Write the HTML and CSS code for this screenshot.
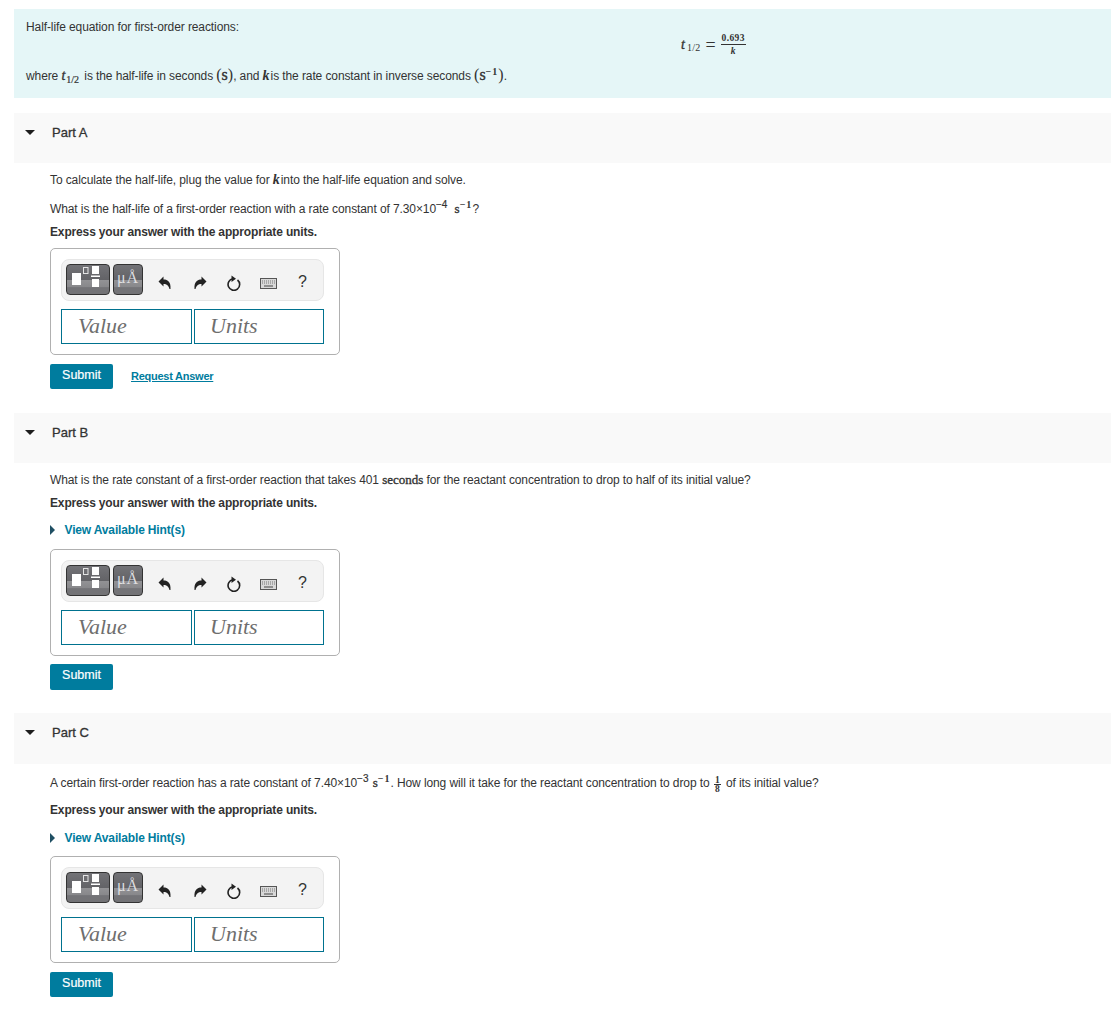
FILE: index.html
```html
<!DOCTYPE html>
<html lang="en">
<head>
<meta charset="utf-8">
<title>Half-life</title>
<link rel="stylesheet" href="styles.css">
</head>
<body>
<svg class="defs" width="0" height="0" aria-hidden="true">
  <defs>
    <g id="i-template">
      <rect x="6" y="9" width="9" height="12" fill="#fff"/>
      <rect x="17.500" y="3.500" width="4.500" height="6" fill="none" stroke="#e4e4e4" stroke-width="1"/>
      <rect x="26" y="2" width="7" height="8" fill="#fff"/>
      <rect x="25" y="11.500" width="9" height="1.500" fill="#fff"/>
      <rect x="26" y="15" width="7" height="8" fill="#fff"/>
    </g>
    <g id="i-undo"><path d="M.5 5.500 5.500.5v3C10 3.500 13 6 12.500 13H11.500C10.500 9.500 9 8 5.500 8v2.500z" fill="#222"/></g>
    <g id="i-redo"><path d="M12.500 5.500 7.500.5v3C3 3.500 0 6 .5 13H1.500C2.500 9.500 4 8 7.500 8v2.500z" fill="#222"/></g>
    <g id="i-reset"><path d="M11.500 5A5.800 5.800 0 1 1 7 3.800" fill="none" stroke="#222" stroke-width="1.600"/><path d="M5.500.5 10 3.800 5.500 7z" fill="#222"/></g>
    <g id="i-keys">
      <rect x=".5" y=".5" width="16" height="10" fill="#d8d8d8" stroke="#555"/>
      <path d="M2 3h13M2 5h13" stroke="#777" stroke-dasharray="1 1"/>
      <path d="M4 8h9" stroke="#777" stroke-width="1.500"/>
    </g>
  </defs>
</svg>

<section class="intro">
  <p class="line">Half-life equation for first-order reactions:</p>
  <div class="formula">
    <span class="m var-t">t</span><sub class="m sub1">1/2</sub><span class="m eq">=</span>
    <span class="frac"><span class="num m b">0.693</span><span class="den m bi">k</span></span>
  </div>
  <p class="line where">where <span class="m var-t">t</span><sub class="m sub">1/2</sub> is the half-life in seconds <span class="m big">(<span class="thick">s</span>)</span>, and <span class="m bi kvar">k</span>is the rate constant in inverse seconds <span class="m big">(<span class="thick">s</span><sup class="sup">−1</sup>)</span>.</p>
</section>

<section class="part part-a">
  <header class="part-head"><span class="caret"></span><h2>Part A</h2></header>
  <div class="part-body">
    <p class="line">To calculate the half-life, plug the value for <span class="m bi kvar">k</span>into the half-life equation and solve.</p>
    <p class="line gap-13">What is the half-life of a first-order reaction with a rate constant of 7.30×10<sup class="sup s2">−4</sup> <span class="m sp">s</span><sup class="sup">−1</sup>?</p>
    <p class="line gap-7"><strong>Express your answer with the appropriate units.</strong></p>
    <div class="widget gap-8">
      <div class="toolbar">
        <span class="tool-btn wide"><svg width="44" height="31" viewBox="0 0 44 31"><use href="#i-template"/></svg></span>
        <span class="tool-btn narrow">μÅ</span>
        <svg class="ico undo" width="14" height="14" viewBox="0 0 14 14"><use href="#i-undo"/></svg>
        <svg class="ico redo" width="14" height="14" viewBox="0 0 14 14"><use href="#i-redo"/></svg>
        <svg class="ico reset" width="16" height="16" viewBox="0 0 16 16"><use href="#i-reset"/></svg>
        <svg class="ico keys" width="17" height="11" viewBox="0 0 17 11"><use href="#i-keys"/></svg>
        <span class="help">?</span>
      </div>
      <div class="fields"><input class="field first" placeholder="Value" aria-label="Value"><input class="field" placeholder="Units" aria-label="Units"></div>
    </div>
    <div class="actions gap-9"><button class="submit">Submit</button><a class="request" href="#">Request Answer</a></div>
  </div>
</section>

<section class="part part-b">
  <header class="part-head"><span class="caret"></span><h2>Part B</h2></header>
  <div class="part-body">
    <p class="line">What is the rate constant of a first-order reaction that takes 401 <span class="m word">seconds</span> for the reactant concentration to drop to half of its initial value?</p>
    <p class="line gap-7"><strong>Express your answer with the appropriate units.</strong></p>
    <p class="line hint gap-10"><span class="hint-caret"></span>View Available Hint(s)</p>
    <div class="widget gap-12">
      <div class="toolbar">
        <span class="tool-btn wide"><svg width="44" height="31" viewBox="0 0 44 31"><use href="#i-template"/></svg></span>
        <span class="tool-btn narrow">μÅ</span>
        <svg class="ico undo" width="14" height="14" viewBox="0 0 14 14"><use href="#i-undo"/></svg>
        <svg class="ico redo" width="14" height="14" viewBox="0 0 14 14"><use href="#i-redo"/></svg>
        <svg class="ico reset" width="16" height="16" viewBox="0 0 16 16"><use href="#i-reset"/></svg>
        <svg class="ico keys" width="17" height="11" viewBox="0 0 17 11"><use href="#i-keys"/></svg>
        <span class="help">?</span>
      </div>
      <div class="fields"><input class="field first" placeholder="Value" aria-label="Value"><input class="field" placeholder="Units" aria-label="Units"></div>
    </div>
    <div class="actions gap-8"><button class="submit">Submit</button></div>
  </div>
</section>

<section class="part part-c">
  <header class="part-head"><span class="caret"></span><h2>Part C</h2></header>
  <div class="part-body">
    <p class="line">A certain first-order reaction has a rate constant of 7.40×10<sup class="sup s3">−3</sup> <span class="m sp">s</span><sup class="sup">−1</sup>. How long will it take for the reactant concentration to drop to <span class="mini-frac"><span class="mini-num m b">1</span><span class="mini-den m b">8</span></span> of its initial value?</p>
    <p class="line gap-10"><strong>Express your answer with the appropriate units.</strong></p>
    <p class="line hint gap-11"><span class="hint-caret"></span>View Available Hint(s)</p>
    <div class="widget gap-11">
      <div class="toolbar">
        <span class="tool-btn wide"><svg width="44" height="31" viewBox="0 0 44 31"><use href="#i-template"/></svg></span>
        <span class="tool-btn narrow">μÅ</span>
        <svg class="ico undo" width="14" height="14" viewBox="0 0 14 14"><use href="#i-undo"/></svg>
        <svg class="ico redo" width="14" height="14" viewBox="0 0 14 14"><use href="#i-redo"/></svg>
        <svg class="ico reset" width="16" height="16" viewBox="0 0 16 16"><use href="#i-reset"/></svg>
        <svg class="ico keys" width="17" height="11" viewBox="0 0 17 11"><use href="#i-keys"/></svg>
        <span class="help">?</span>
      </div>
      <div class="fields"><input class="field first" placeholder="Value" aria-label="Value"><input class="field" placeholder="Units" aria-label="Units"></div>
    </div>
    <div class="actions gap-9"><button class="submit">Submit</button></div>
  </div>
</section>
</body>
</html>
```
FILE: styles.css
```css
* { box-sizing: border-box; }
html, body { margin: 0; }
body {
  padding: 9px 0 0 14px;
  font: 12px/16px "Liberation Sans", Arial, sans-serif;
  color: #333;
  background: #fff;
  letter-spacing: -.1px;
}
.defs { position: absolute; }
p { margin: 0; }
.line { line-height: 16px; white-space: nowrap; }
strong { letter-spacing: -.15px; }

.gap-7 { margin-top: 7px; }
.gap-8 { margin-top: 8px; }
.gap-9 { margin-top: 9px; }
.gap-10 { margin-top: 10px; }
.gap-11 { margin-top: 11px; }
.gap-12 { margin-top: 12px; }
.gap-13 { margin-top: 13px; }

.m { font-family: "Liberation Serif", "Times New Roman", serif; letter-spacing: 0; }
.b { font-weight: 700; }
.bi { font-weight: 700; font-style: italic; }
.var-t { font-size: 14px; font-style: italic; -webkit-text-stroke: .35px #333; }
.thick { -webkit-text-stroke: .4px #333; }

.intro {
  height: 89px;
  padding: 10px 0 0 12px;
  background: #e5f6f7;
}
.formula {
  display: flex;
  align-items: center;
  height: 26px;
  margin: -3px 0 0 655px;
  font-size: 13px;
}
.sub1 { align-self: flex-end; margin: 0 0 5px 2px; font-size: 10px; line-height: 1; letter-spacing: .3px; }
.eq { margin: 0 5px 0 5px; font-size: 18px; font-weight: 400; }
.frac { display: inline-flex; flex-direction: column; align-items: center; width: 25px; font-size: 9.500px; line-height: 10px; }
.num { border-bottom: 1px solid #333; width: 100%; text-align: center; padding-bottom: 1px; letter-spacing: .4px; }
.den { line-height: 12px; }
.where { margin-top: 9px; }
.sub { font-size: 10px; line-height: 1; vertical-align: -3px; margin-left: 1px; -webkit-text-stroke: .2px #333; margin-right: 2px; }
.big { font-size: 16px; }
.kvar { font-size: 14px; margin-right: 1px; }
.sup { font-size: 10px; line-height: 0; vertical-align: 5px; font-family: "Liberation Serif", serif; font-weight: 700; letter-spacing: 1px; }
.s2, .s3 { font-family: "Liberation Sans", sans-serif; letter-spacing: 0; font-weight: 400; -webkit-text-stroke: .2px #333; }
.s2 { margin-right: 3px; }
.sp { font-size: 13px; margin-left: 1px; -webkit-text-stroke: .35px #333; }
.word { font-size: 13px; -webkit-text-stroke: .35px #333; }

.part { width: 1097px; }
.part-a { margin-top: 15px; }
.part-b { margin-top: 24px; }
.part-c { margin-top: 23px; }
.part-head {
  display: flex;
  align-items: flex-start;
  height: 50px;
  padding: 12px 0 0 11px;
  background: #f9f9f9;
}
.part-c .part-head { height: 51px; }
.part-head h2 { margin: 0 0 0 17px; font-size: 13px; line-height: 16px; font-weight: 400; letter-spacing: 0; -webkit-text-stroke: .3px #333; }
.caret {
  width: 0; height: 0;
  margin-top: 5px;
  border-left: 5.500px solid transparent;
  border-right: 5.500px solid transparent;
  border-top: 5px solid #1d1d1d;
}
.part-body { padding: 9px 0 0 36px; }
.part-c .part-body { padding-top: 11px; }

.hint { color: #007c9e; font-weight: 700; display: flex; align-items: center; font-size: 12px; letter-spacing: -.15px; position: relative; top: 1px; }
.hint-caret {
  width: 0; height: 0;
  margin-right: 9.500px;
  border-top: 5px solid transparent;
  border-bottom: 5px solid transparent;
  border-left: 5px solid #1f4f63;
}

.widget {
  width: 290px;
  height: 107px;
  padding: 10px 0 0 10px;
  border: 1px solid #b0b0b0;
  border-radius: 5px;
}
.toolbar {
  display: flex;
  align-items: center;
  width: 263px;
  height: 42px;
  padding-left: 4px;
  padding-bottom: 1px;
  background: #f3f3f3;
  border: 1px solid #e6e6e6;
  border-radius: 8px;
}
.tool-btn {
  display: flex;
  align-items: center;
  justify-content: center;
  height: 31px;
  border: 1px solid #333;
  border-radius: 4px;
  background: linear-gradient(#737377 0, #636367 50%, #929295 52%, #88888b 75%, #737377 78%, #737376 100%);
}
.tool-btn svg { display: block; flex: none; margin: -1px; }
.wide { width: 44px; }
.narrow { width: 30px; margin-left: 3px; font: 16px/1 "Liberation Serif", serif; letter-spacing: 1px; color: #dedee0; padding-bottom: 3px; }
.ico { flex: none; display: block; margin-top: 6px; }
.undo { margin-left: 15px; }
.redo { margin-left: 22px; }
.reset { margin-left: 18px; }
.keys { margin-left: 18px; margin-top: 8px; }
.help { margin: 5px 0 0 21px; font-size: 16px; line-height: 16px; letter-spacing: 0; color: #333; }

.fields { display: flex; gap: 2px; margin: 8px 0 0 0; }
.field {
  width: 131px;
  height: 35px;
  padding: 0 0 2px 16px;
  border: 1px solid #00728f;
  border-radius: 0;
  background: #fff;
  font: italic 22px "Liberation Serif", "Times New Roman", serif;
  outline: none;
}
.field:not(.first) { width: 130px; padding-left: 15px; }
.field::placeholder { color: #6e6e6e; opacity: 1; }

.actions { display: flex; align-items: center; }
.submit {
  width: 63px;
  height: 25px;
  padding: 0 0 4px;
  border: 0;
  border-radius: 2px;
  background: #007c9e;
  color: #fff;
  font: 12.500px "Liberation Sans", Arial, sans-serif;
  -webkit-text-stroke: .2px #fff;
}
.part-b .submit { height: 26px; }
.request {
  margin-left: 18px;
  margin-top: -1px;
  color: #007c9e;
  font-size: 11px;
  font-weight: 700;
  letter-spacing: -.25px;
  text-decoration: underline;
}

.mini-frac { display: inline-flex; flex-direction: column; align-items: center; vertical-align: top; height: 16px; width: 7px; margin: 1px 2px 0 1px; font-size: 9.500px; line-height: 8px; }
.mini-num { border-bottom: 1px solid #333; width: 100%; text-align: center; }
.mini-den { line-height: 8px; }
```
